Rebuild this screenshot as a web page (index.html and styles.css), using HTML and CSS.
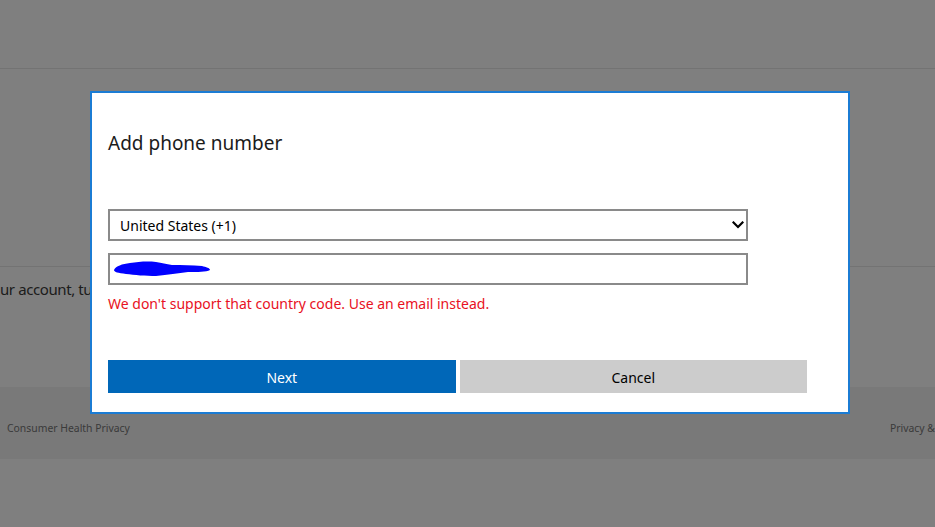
FILE: index.html
```html
<!DOCTYPE html>
<html lang="en">
<head>
<meta charset="utf-8">
<title>Add phone number</title>
<link rel="stylesheet" href="styles.css">
</head>
<body>
<div class="page">
  <header class="top"></header>
  <section class="band"></section>
  <section class="msg">
    <p class="msg-text">ur account, tur</p>
  </section>
  <footer class="foot">
    <span class="foot-link">Consumer Health Privacy</span>
    <span class="foot-link right">Privacy &amp;</span>
  </footer>
</div>

<div class="overlay">
  <div class="dialog" role="dialog" aria-labelledby="dlg-title">
    <h2 class="title" id="dlg-title">Add phone number</h2>
    <div class="field select-wrap">
      <select class="select" aria-label="Country code">
        <option>United States (+1)</option>
      </select>
      <svg class="chev" width="12" height="8" viewBox="0 0 12 8" aria-hidden="true">
        <path d="M1.5 1.5 L6 6 L10.5 1.5" fill="none" stroke="#000" stroke-width="2.2" stroke-linecap="square"/>
      </svg>
    </div>
    <div class="field input-wrap">
      <input class="input" type="text" aria-label="Phone number">
      <svg class="scribble" width="100" height="18" viewBox="0 0 100 18" aria-hidden="true">
        <path d="M2 10 C4 6 10 4 18 3 C26 2 34 1 44 2 C50 3 54 4 60 5 C70 5 80 5 90 6 C94 7 98 8 98 10 C94 12 86 12 76 12 C66 13 56 15 44 16 C34 16 22 15 14 14 C6 13 2 12 2 10 Z" fill="#0000ff"/>
      </svg>
    </div>
    <p class="error">We don't support that country code. Use an email instead.</p>
    <div class="buttons">
      <button class="btn primary" type="button">Next</button>
      <button class="btn secondary" type="button">Cancel</button>
    </div>
  </div>
</div>
</body>
</html>
```

FILE: styles.css
```css
* { box-sizing: border-box; }

html, body {
  margin: 0;
  padding: 0;
  height: 100%;
}

body {
  font-family: "Noto Sans", "Open Sans", sans-serif;
  background: #ffffff;
  color: #333333;
  overflow: hidden;
}

.page {
  display: flex;
  flex-direction: column;
  min-height: 100%;
}

.top {
  height: 69px;
  border-bottom: 1px solid #e6e6e6;
}

.band {
  height: 198px;
  border-bottom: 1px solid #e6e6e6;
}

.msg {
  height: 120px;
  padding-top: 12px;
}

.msg-text {
  margin: 0;
  font-size: 15px;
  line-height: 20px;
  letter-spacing: -0.4px;
  color: #3a3a3a;
  white-space: nowrap;
}

.foot {
  height: 72px;
  background: #f2f2f2;
  display: flex;
  justify-content: space-between;
  padding: 34px 0 0 7px;
  font-size: 10.4px;
  line-height: 14px;
  color: #767676;
  overflow: hidden;
}

.foot-link.right {
  white-space: nowrap;
  width: 45px;
}

.overlay {
  position: fixed;
  inset: 0;
  background: rgba(0, 0, 0, 0.5);
  padding: 91px 0 0 90px;
}

.dialog {
  width: 760px;
  height: 323px;
  background: #ffffff;
  border: 2px solid #1b7cd4;
  padding: 36px 41px 19px 16px;
  display: flex;
  flex-direction: column;
}

.title {
  margin: 0;
  font-size: 19px;
  font-weight: 400;
  line-height: 28px;
  color: #1b1b1b;
}

.field {
  position: relative;
  width: 640px;
  height: 32px;
}

.select-wrap {
  margin-top: 52px;
}

.input-wrap {
  margin-top: 12px;
}

.select, .input {
  display: block;
  width: 100%;
  height: 100%;
  border: 2px solid #8a8a8a;
  background: #ffffff;
  font-family: inherit;
  font-size: 14px;
  color: #000000;
  margin: 0;
  border-radius: 0;
  outline: none;
}

.select {
  appearance: none;
  -webkit-appearance: none;
  padding: 0 30px 0 10px;
}

.input {
  padding: 0 10px;
}

.chev {
  position: absolute;
  right: 4px;
  top: 12px;
}

.scribble {
  position: absolute;
  left: 4px;
  top: 7px;
}

.error {
  margin: 9px 0 0;
  font-size: 14px;
  line-height: 20px;
  color: #e81123;
}

.buttons {
  margin-top: auto;
  display: flex;
  gap: 4px;
  width: 699px;
}

.btn {
  flex: 1 1 0;
  height: 33px;
  border: none;
  font-family: inherit;
  font-size: 14px;
  line-height: 33px;
  margin: 0;
  padding: 1px 0 0;
}

.primary {
  background: #0067b8;
  color: #ffffff;
}

.secondary {
  background: #cccccc;
  color: #000000;
}
```
